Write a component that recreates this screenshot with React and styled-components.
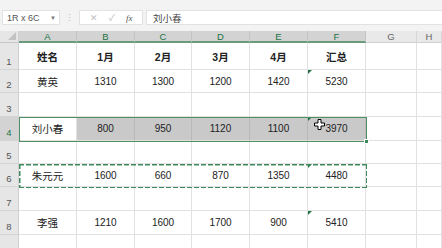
import React from "react";
import styled, { createGlobalStyle, css } from "styled-components";

const Global = createGlobalStyle`
  html, body { margin: 0; padding: 0; background: #f3f3f3; }
  * { box-sizing: border-box; }
`;

const FONT = `"Liberation Sans", "Noto Sans CJK SC", Arial, sans-serif`;
const GREEN = "#217346";
const DASH = "#3f8a5c";

const Page = styled.div`
  width: 442px;
  height: 248px;
  overflow: hidden;
  background: #f3f3f3;
  font-family: ${FONT};
  display: flex;
  flex-direction: column;
`;

const FormulaBar = styled.div`
  display: flex;
  align-items: stretch;
  height: 15px;
  margin-top: 10px;
  padding-left: 2px;
`;

const NameBox = styled.div`
  width: 58px;
  background: #fff;
  border: 1px solid #e2e2e2;
  display: flex;
  align-items: center;
  justify-content: space-between;
  padding: 0 3px 0 4px;
  font-size: 9px;
  color: #555;
`;

const Caret = styled.span`
  font-size: 6px;
  color: #777;
`;

const Dots = styled.div`
  width: 19px;
  display: flex;
  align-items: center;
  justify-content: center;
  color: #b8b8b8;
  font-size: 9px;
`;

const FnBox = styled.div`
  width: 64px;
  background: #fff;
  border: 1px solid #e2e2e2;
  display: flex;
  align-items: center;
  justify-content: space-around;
  padding: 0 4px;
  color: #bdbdbd;
  font-size: 9px;
`;

const FxLabel = styled.span`
  font-family: "Liberation Serif", serif;
  font-style: italic;
  color: #555;
  font-size: 9px;
`;

const FormulaInput = styled.div`
  flex: 1;
  margin-left: 3px;
  background: #fff;
  border: 1px solid #e2e2e2;
  border-right: none;
  display: flex;
  align-items: center;
  padding-left: 6px;
  font-size: 9.5px;
  color: #444;
`;

const Sheet = styled.div`
  position: relative;
  margin-top: 6px;
  display: grid;
  grid-template-columns: 19px 58px 58px 57px 58px 58px 58px 51px 1fr;
  grid-template-rows: 12px 27px 23px 24px 24px 23px 23px 24px 24px 20px;
  background: #fff;
`;

const Corner = styled.div`
  background: #e6e6e6;
  border-right: 1px solid #d0d0d0;
  border-bottom: 1px solid #c8c8c8;
  position: relative;
  &::after {
    content: "";
    position: absolute;
    right: 2px;
    bottom: 2px;
    width: 0;
    height: 0;
    border-left: 8px solid transparent;
    border-bottom: 8px solid #c2c2c2;
  }
`;

const ColHead = styled.div`
  display: flex;
  align-items: center;
  justify-content: center;
  font-size: 9.5px;
  color: #666;
  background: #e9e9e9;
  border-right: 1px solid #d6d6d6;
  border-bottom: 1px solid #d0d0d0;
  ${(p) =>
    p.$sel &&
    css`
      background: #d3d3d3;
      color: ${GREEN};
      border-bottom: 2px solid #6a9c7b;
      border-right-color: #c4c4c4;
    `}
`;

const RowHead = styled.div`
  display: flex;
  align-items: flex-end;
  justify-content: center;
  padding-bottom: 2px;
  font-size: 9.5px;
  color: #555;
  background: #e6e6e6;
  border-right: 1px solid #d0d0d0;
  border-bottom: 1px solid #d4d4d4;
  ${(p) =>
    p.$sel &&
    css`
      background: #d3d3d3;
      color: ${GREEN};
    `}
`;

const Cell = styled.div`
  display: flex;
  align-items: center;
  justify-content: center;
  font-size: ${(p) => (p.$cjk ? "10.5px" : "10px")};
  font-weight: ${(p) => (p.$bold ? 700 : 400)};
  color: #222;
  background: ${(p) => (p.$sel ? "#c9c9c9" : "#fff")};
  border-right: 1px solid ${(p) => (p.$sel ? "#b9b9b9" : "#e1e1e1")};
  border-bottom: 1px solid #e1e1e1;
  position: relative;
  ${(p) =>
    p.$flag &&
    css`
      &::before {
        content: "";
        position: absolute;
        left: 0;
        top: 0;
        width: 0;
        height: 0;
        border-top: 4px solid ${GREEN};
        border-right: 4px solid transparent;
      }
    `}
`;

const RangeFrame = styled.div`
  position: absolute;
  left: ${(p) => p.$left}px;
  top: ${(p) => p.$top}px;
  width: ${(p) => p.$width}px;
  height: ${(p) => p.$height}px;
  pointer-events: none;
  ${(p) =>
    p.$dashed
      ? css`
          background-image:
            repeating-linear-gradient(90deg, ${DASH} 0 5px, transparent 5px 7px),
            repeating-linear-gradient(90deg, ${DASH} 0 5px, transparent 5px 7px),
            repeating-linear-gradient(180deg, ${DASH} 0 5px, transparent 5px 7px),
            repeating-linear-gradient(180deg, ${DASH} 0 5px, transparent 5px 7px);
          background-size: 100% 1.5px, 100% 1.5px, 1.5px 100%, 1.5px 100%;
          background-position: 0 0, 0 100%, 0 0, 100% 0;
          background-repeat: no-repeat;
        `
      : css`
          border: 1.5px solid #4f8f64;
        `}
`;

const FillHandle = styled.div`
  position: absolute;
  right: -3px;
  bottom: -3px;
  width: 5px;
  height: 5px;
  background: #3f8a5c;
  border: 1px solid #fff;
`;

const Cursor = styled.svg`
  position: absolute;
  left: 314px;
  top: 88px;
  width: 11px;
  height: 11px;
  pointer-events: none;
`;

const cols = ["A", "B", "C", "D", "E", "F", "G", "H"];

const rows = [
  { n: 1, cells: ["姓名", "1月", "2月", "3月", "4月", "汇总"], bold: true },
  { n: 2, cells: ["黄英", "1310", "1300", "1200", "1420", "5230"] },
  { n: 3, cells: [] },
  { n: 4, cells: ["刘小春", "800", "950", "1120", "1100", "3970"], sel: true },
  { n: 5, cells: [] },
  { n: 6, cells: ["朱元元", "1600", "660", "870", "1350", "4480"] },
  { n: 7, cells: [] },
  { n: 8, cells: ["李强", "1210", "1600", "1700", "900", "5410"] },
  { n: null, cells: [] },
];

const isCjk = (s) => /[\u4e00-\u9fff]/.test(s || "");

export default function App() {
  return (
    <Page>
      <Global />
      <FormulaBar>
        <NameBox>
          <span>1R x 6C</span>
          <Caret>▼</Caret>
        </NameBox>
        <Dots>⋮</Dots>
        <FnBox>
          <span>✕</span>
          <span>✓</span>
          <FxLabel>fx</FxLabel>
        </FnBox>
        <FormulaInput>刘小春</FormulaInput>
      </FormulaBar>
      <Sheet>
        <Corner />
        {cols.map((c, i) => (
          <ColHead key={c} $sel={i < 6}>
            {c}
          </ColHead>
        ))}
        {rows.map((r, ri) => (
          <React.Fragment key={ri}>
            <RowHead $sel={r.sel}>{r.n}</RowHead>
            {cols.map((c, i) => {
              const v = r.cells[i];
              return (
                <Cell
                  key={c}
                  $bold={r.bold}
                  $cjk={isCjk(v)}
                  $sel={r.sel && i >= 1 && i <= 5}
                  $flag={i === 5 && v && !r.bold}
                >
                  {v}
                </Cell>
              );
            })}
          </React.Fragment>
        ))}
        <RangeFrame $left={19} $top={86} $width={348} $height={25}>
          <FillHandle />
        </RangeFrame>
        <RangeFrame $dashed $left={19} $top={133} $width={348} $height={24} />
        <Cursor viewBox="0 0 11 11">
          <path
            d="M4 0.5h3v3.5h3.5v3h-3.5v3.5h-3v-3.5h-3.5v-3h3.5z"
            fill="#fff"
            stroke="#000"
            strokeWidth="1"
          />
        </Cursor>
      </Sheet>
    </Page>
  );
}
